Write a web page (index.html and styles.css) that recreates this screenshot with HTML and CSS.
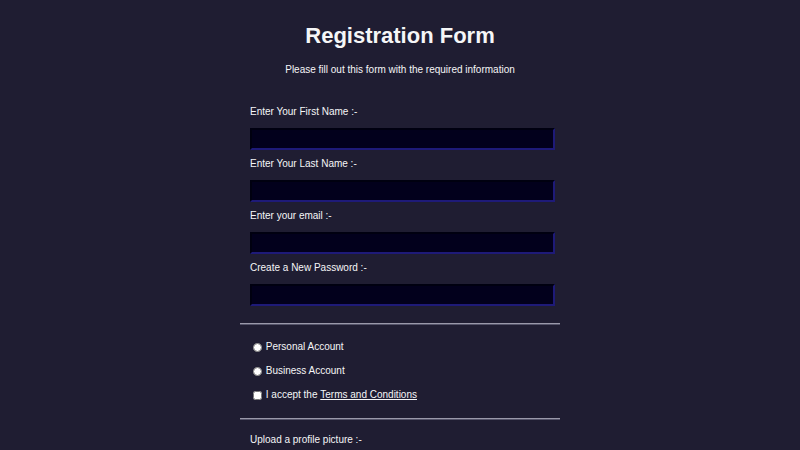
FILE: index.html
```html
<!DOCTYPE html>
<html lang="en">
<head>
<meta charset="utf-8">
<title>Registration Form</title>
<link rel="stylesheet" href="styles.css">
</head>
<body>
<h1 class="title">Registration Form</h1>
<p class="subtitle">Please fill out this form with the required information</p>
<form class="form">
  <fieldset class="group">
    <label class="field">Enter Your First Name :-<input class="text" type="text"></label>
    <label class="field">Enter Your Last Name :-<input class="text" type="text"></label>
    <label class="field">Enter your email :-<input class="text" type="email"></label>
    <label class="field">Create a New Password :-<input class="text" type="password"></label>
  </fieldset>
  <hr class="rule">
  <fieldset class="group choices">
    <label class="choice"><input class="radio" type="radio" name="acct"> Personal Account</label>
    <label class="choice"><input class="radio" type="radio" name="acct"> Business Account</label>
    <label class="choice"><input class="check" type="checkbox"> I accept the <a class="link" href="#">Terms and Conditions</a></label>
  </fieldset>
  <hr class="rule">
  <fieldset class="group upload">
    <label class="field">Upload a profile picture :-</label>
  </fieldset>
</form>
</body>
</html>
```
FILE: styles.css
```css
html, body {
  margin: 0;
  padding: 0;
}
body {
  background: #1f1d32;
  color: #f5f6f7;
  font-family: "Liberation Sans", Arial, sans-serif;
  font-size: 10px;
  line-height: 14px;
}
.title {
  font-size: 22px;
  line-height: 28px;
  font-weight: bold;
  text-align: center;
  margin: 22px 0 0;
}
.subtitle {
  text-align: center;
  margin: 13px 0 0;
}
.form {
  width: 320px;
  margin: 28px auto 0;
}
.group {
  border: none;
  margin: 0;
  padding: 0 0 0 10px;
}
.field {
  display: block;
  margin: 0 0 7px;
}
.text {
  display: block;
  box-sizing: border-box;
  width: 305px;
  height: 22px;
  margin: 9px 0 0;
  padding: 0;
  background: #02001c;
  border: 2px solid;
  border-color: #000010 #1e1a78 #1e1a78 #000010;
  color: #fff;
}
.rule {
  margin: 10px 0 0;
  height: 0;
  border: none;
  border-top: 1px solid #9a99aa;
  border-bottom: 1px solid #55546a;
}
.choices {
  padding-top: 15px;
  padding-bottom: 6px;
}
.choice {
  display: flex;
  align-items: center;
  height: 14px;
  margin-bottom: 10px;
  white-space: pre;
}
.choice:last-child {
  margin-bottom: 0;
}
.radio, .check {
  width: 9px;
  height: 9px;
  margin: 0 1px 0 3px;
}
.link {
  color: #f5f6f7;
  text-decoration: underline;
}
.upload {
  padding-top: 13px;
}
```
